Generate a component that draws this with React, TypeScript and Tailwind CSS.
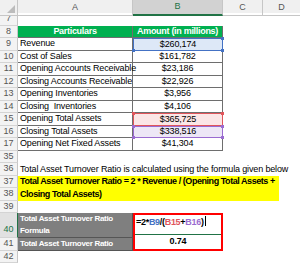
import React from "react"

const font = { fontFamily: '"Liberation Sans", Arial, sans-serif' }

function RowHead({ n, active = false, tall = false }: { n: string; active?: boolean; tall?: boolean }) {
  return (
    <div
      className={`flex ${tall ? "items-end pb-[1px]" : "items-center"} justify-center border-b border-r text-[9px] tracking-normal ${
        active ? "bg-[#e1e1e1] text-[#217346] border-r-[#217346]" : "bg-[#f3f3f3] text-[#555] border-r-[#c6c6c6]"
      } border-b-[#d4d4d4]`}
    >
      {n}
    </div>
  )
}

function Marker({ color, fill, children }: { color: string; fill: string; children: React.ReactNode }) {
  return (
    <div className={`relative flex items-center justify-center border ${color} ${fill}`}>
      {children}
    </div>
  )
}

const rows: [string, string, string][] = [
  ["9", "Revenue", "$260,174"],
  ["10", "Cost of Sales", "$161,782"],
  ["11", "Opening Accounts Receivable", "$23,186"],
  ["12", "Closing Accounts Receivable", "$22,926"],
  ["13", "Opening Inventories", "$3,956"],
  ["14", "Closing  Inventories", "$4,106"],
  ["15", "Opening Total Assets", "$365,725"],
  ["16", "Closing Total Assets", "$338,516"],
  ["17", "Opening Net Fixed Assets", "$41,304"],
]

export default function App() {
  return (
    <div className="w-[300px] h-[263px] overflow-hidden bg-white text-[9px] tracking-[-0.15px] text-black" style={font}>
      {/* column headers */}
      <div className="grid grid-cols-[18px_115px_90px_40px_1fr] h-[13px] bg-[#f0f0f0] text-[#555] text-[9px] tracking-normal">
        <div className="relative border-r border-b border-[#c6c6c6]">
          <div className="absolute right-[2px] bottom-[2px] w-0 h-0 border-l-[8px] border-l-transparent border-b-[8px] border-b-[#bcbcbc]" />
        </div>
        <div className="flex items-center justify-center border-r border-b border-[#c6c6c6]">A</div>
        <div className="flex items-center justify-center bg-[#d2d2d2] text-[#217346] border-r border-r-[#c6c6c6] border-b-2 border-b-[#217346]">B</div>
        <div className="flex items-center justify-center border-r border-b border-[#c6c6c6]">C</div>
        <div className="flex items-center justify-center border-b border-[#c6c6c6]">D</div>
      </div>

      <div className="grid grid-cols-[18px_115px_90px_1fr] auto-rows-[12.5px]">
        {/* row 7 */}
        <RowHead n="7" />
        <div className="col-span-3" />

        {/* row 8 header */}
        <RowHead n="8" />
        <div className="flex items-center justify-center bg-[#00b050] text-white font-bold tracking-[-0.3px] border-r border-b border-[#6e6e6e]">Particulars</div>
        <div className="flex items-center justify-center bg-[#00b050] text-white font-bold tracking-[-0.3px] border-r border-b border-[#6e6e6e] whitespace-nowrap">Amount (in millions)</div>
        <div />

        {rows.map(([n, label, val]) => (
          <React.Fragment key={n}>
            <RowHead n={n} />
            <div className="flex items-center pl-[2px] border-r border-b border-[#6e6e6e] whitespace-pre">{label}</div>
            {n === "9" ? (
              <Marker color="border-[#4472c4]" fill="bg-[#dde8f7]">
                {val}
                <span className="absolute -right-[2px] -top-[2px] w-[3px] h-[3px] bg-[#4472c4]" />
                <span className="absolute -right-[2px] -bottom-[2px] w-[3px] h-[3px] bg-[#4472c4]" />
                <span className="absolute -left-[2px] -bottom-[2px] w-[3px] h-[3px] bg-[#4472c4]" />
              </Marker>
            ) : n === "15" ? (
              <Marker color="border-[#e0555b]" fill="bg-[#fbe6e6]">
                {val}
                <span className="absolute -left-[2px] -top-[2px] w-[3px] h-[3px] bg-[#e0555b]" />
                <span className="absolute -right-[2px] -top-[2px] w-[3px] h-[3px] bg-[#e0555b]" />
              </Marker>
            ) : n === "16" ? (
              <Marker color="border-[#9a6bd0]" fill="bg-[#ede7f6]">
                {val}
                <span className="absolute -left-[2px] -top-[2px] w-[3px] h-[3px] bg-[#9a6bd0]" />
                <span className="absolute -right-[2px] -top-[2px] w-[3px] h-[3px] bg-[#9a6bd0]" />
                <span className="absolute -left-[2px] -bottom-[2px] w-[3px] h-[3px] bg-[#9a6bd0]" />
                <span className="absolute -right-[2px] -bottom-[2px] w-[3px] h-[3px] bg-[#9a6bd0]" />
              </Marker>
            ) : (
              <div className="flex items-center justify-center border-r border-b border-[#6e6e6e]">{val}</div>
            )}
            <div />
          </React.Fragment>
        ))}

        {/* row 35 */}
        <RowHead n="35" />
        <div className="col-span-3" />

        {/* row 36 */}
        <RowHead n="36" />
        <div className="col-span-3 flex items-center pl-[2px] whitespace-nowrap">
          Total Asset Turnover Ratio is calculated using the formula given below
        </div>

        {/* rows 37-38 */}
        <RowHead n="37" />
        <div className="col-span-3 flex">
          <div className="w-[261px] bg-[#ffff00] font-bold tracking-[-0.45px] flex items-center pl-[2px] whitespace-nowrap">
            Total Asset Turnover Ratio = 2 * Revenue / (Opening Total Assets +
          </div>
        </div>
        <RowHead n="38" />
        <div className="col-span-3 flex">
          <div className="w-[261px] bg-[#ffff00] font-bold tracking-[-0.45px] flex items-center pl-[2px] whitespace-nowrap">
            Closing Total Assets)
          </div>
        </div>

        {/* row 39 */}
        <RowHead n="39" />
        <div className="col-span-3" />

        {/* row 40 */}
        <div className="row-span-2 grid">
          <RowHead n="40" active tall />
        </div>
        <div className="row-span-2 bg-[#7f7f7f] text-white text-[8px] font-bold tracking-[-0.3px] flex flex-col justify-center pl-[2px] leading-[12px] border-r border-b border-[#555] whitespace-nowrap">
          <span>Total Asset Turnover Ratio</span>
          <span>Formula</span>
        </div>
        <div className="row-span-3 relative flex flex-col border-2 border-[#ff0000]">
          <div className="h-[24px] flex items-start pt-[1px] pl-[1px] border-b border-[#217346] font-bold tracking-[-0.3px]">
            <span>=2*</span>
            <span className="text-[#4472c4]">B9</span>
            <span>/(</span>
            <span className="text-[#e0555b]">B15</span>
            <span>+</span>
            <span className="text-[#9a6bd0]">B16</span>
            <span>)</span>
            <span className="ml-[1px] w-px h-[10px] bg-black" />
          </div>
          <div className="flex-1 flex items-center justify-center font-bold">0.74</div>
        </div>
        <div className="row-span-2" />

        {/* row 41 */}
        <RowHead n="41" />
        <div className="bg-[#7f7f7f] text-white text-[8px] font-bold tracking-[-0.3px] flex items-center pl-[2px] border-r border-b border-[#555] whitespace-nowrap">
          Total Asset Turnover Ratio
        </div>
        <div />

        {/* row 42 */}
        <RowHead n="42" />
        <div className="col-span-3" />
      </div>
    </div>
  )
}
